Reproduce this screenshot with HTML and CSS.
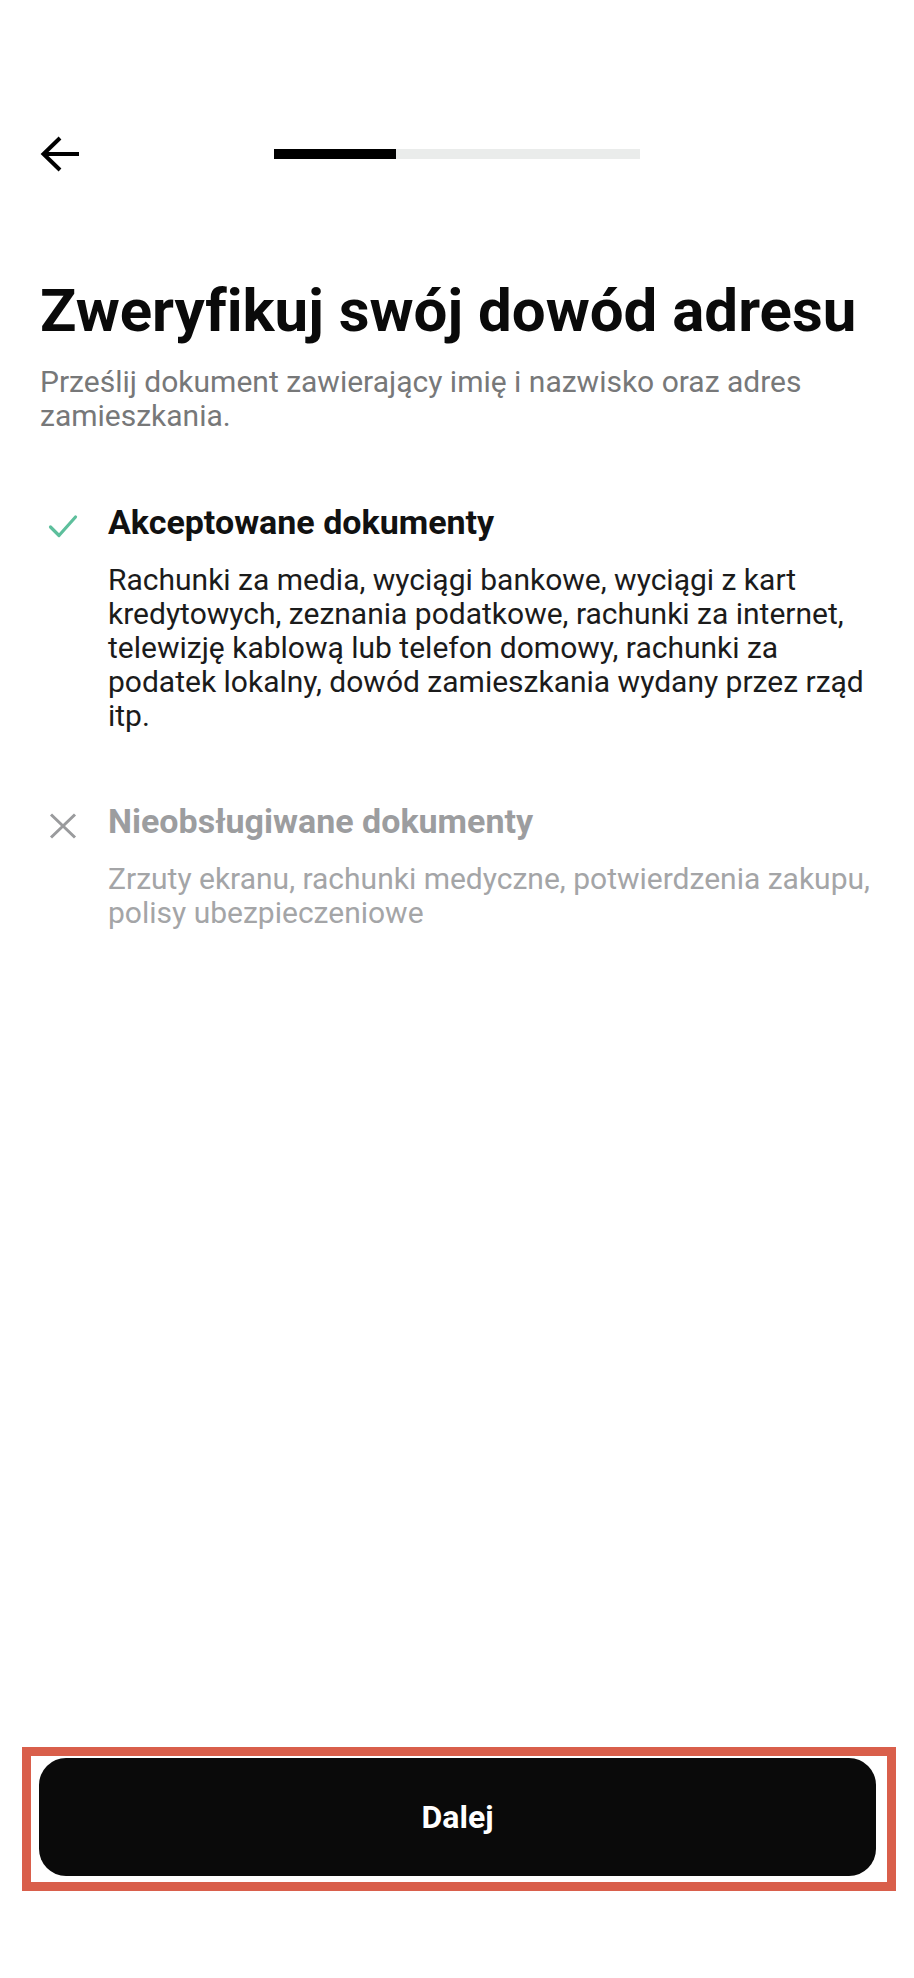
FILE: index.html
```html
<!DOCTYPE html>
<html lang="pl">
<head>
<meta charset="utf-8">
<title>Zweryfikuj swój dowód adresu</title>
<link rel="stylesheet" href="styles.css">
</head>
<body>
<div class="screen">
  <header class="topbar">
    <button class="back" aria-label="Wstecz">
      <svg width="44" height="40" viewBox="0 0 44 40" aria-hidden="true">
        <path d="M4 20H40" fill="none" stroke="#000" stroke-width="4"/>
        <path d="M21 4L4.5 20L21 36" fill="none" stroke="#000" stroke-width="4" stroke-linejoin="miter"/>
      </svg>
    </button>
    <div class="progress"><div class="progress-fill"></div></div>
    <div></div>
  </header>

  <main class="content">
    <h1 class="title">Zweryfikuj swój dowód adresu</h1>
    <p class="subtitle">Prześlij dokument zawierający imię i nazwisko oraz adres zamieszkania.</p>

    <section class="item">
      <svg class="item-icon" width="30" height="24" viewBox="0 0 30 24" aria-hidden="true">
        <polyline points="2.5,13 11,21.5 27.5,3" fill="none" stroke="#5dbf9c" stroke-width="3.2" stroke-linecap="round" stroke-linejoin="round"/>
      </svg>
      <div class="item-body">
        <h2 class="item-title">Akceptowane dokumenty</h2>
        <p class="item-text">Rachunki za media, wyciągi bankowe, wyciągi z kart kredytowych, zeznania podatkowe, rachunki za internet, telewizję kablową lub telefon domowy, rachunki za podatek lokalny, dowód zamieszkania wydany przez rząd itp.</p>
      </div>
    </section>

    <section class="item item-muted">
      <svg class="item-icon icon-x" width="30" height="26" viewBox="0 0 30 26" aria-hidden="true">
        <path d="M3 1.5L27 24.5M27 1.5L3 24.5" fill="none" stroke="#9a9b9d" stroke-width="3"/>
      </svg>
      <div class="item-body">
        <h2 class="item-title">Nieobsługiwane dokumenty</h2>
        <p class="item-text">Zrzuty ekranu, rachunki medyczne, potwierdzenia zakupu, polisy ubezpieczeniowe</p>
      </div>
    </section>
  </main>

  <footer class="footer">
    <div class="highlight">
      <button class="primary">Dalej</button>
    </div>
  </footer>
</div>
</body>
</html>
```

FILE: styles.css
```css
* {
  box-sizing: border-box;
}

html, body {
  margin: 0;
  padding: 0;
  background: #ffffff;
}

body {
  font-family: Roboto, "Noto Sans", "Liberation Sans", sans-serif;
  font-variant-ligatures: none;
  color: #0a0a0a;
}

.screen {
  min-height: 100vh;
  display: flex;
  flex-direction: column;
}

.topbar {
  display: grid;
  grid-template-columns: 1fr 366px 1fr;
  align-items: center;
  height: 40px;
  margin-top: 134px;
}

.back {
  justify-self: start;
  margin-left: 39px;
  padding: 0;
  border: 0;
  background: none;
  width: 44px;
  height: 40px;
  display: flex;
  align-items: center;
}

.progress {
  height: 10px;
  background: #eaeceb;
  display: flex;
}

.progress-fill {
  width: 122px;
  height: 100%;
  background: #000000;
}

.content {
  padding: 0 36px 0 40px;
}

.title {
  margin: 102px 0 0 0;
  font-size: 60px;
  line-height: 70px;
  font-weight: 700;
  color: #0a0a0a;
  letter-spacing: 0;
}

.subtitle {
  margin: 19px 0 0 0;
  font-size: 30px;
  line-height: 34px;
  font-weight: 400;
  color: #777879;
}

.item {
  display: flex;
  align-items: flex-start;
  margin-top: 69px;
}

.item-muted {
  margin-top: 68px;
}

.item-icon {
  flex: none;
  margin: 12px 30px 0 8px;
}

.icon-x {
  margin-top: 12px;
}

.item-body {
  flex: 1;
  min-width: 0;
}

.item-title {
  margin: 0;
  font-size: 34px;
  line-height: 40px;
  font-weight: 700;
  color: #111111;
}

.item-text {
  margin: 21px 0 0 0;
  font-size: 30px;
  line-height: 34px;
  font-weight: 400;
  color: #1b1b1b;
}

.item-muted .item-title {
  color: #9c9d9f;
}

.item-muted .item-text {
  color: #a4a5a7;
}

.footer {
  margin-top: auto;
  padding: 0 18px 87px 22px;
}

.highlight {
  border: 9px solid #d95f4b;
  padding: 2px 11px 6px 8px;
}

.primary {
  display: block;
  width: 100%;
  height: 118px;
  border: 0;
  border-radius: 27px;
  background: #0a0a0a;
  color: #ffffff;
  font-family: Roboto, "Noto Sans", "Liberation Sans", sans-serif;
  font-size: 32px;
  font-weight: 700;
  cursor: pointer;
}
```
